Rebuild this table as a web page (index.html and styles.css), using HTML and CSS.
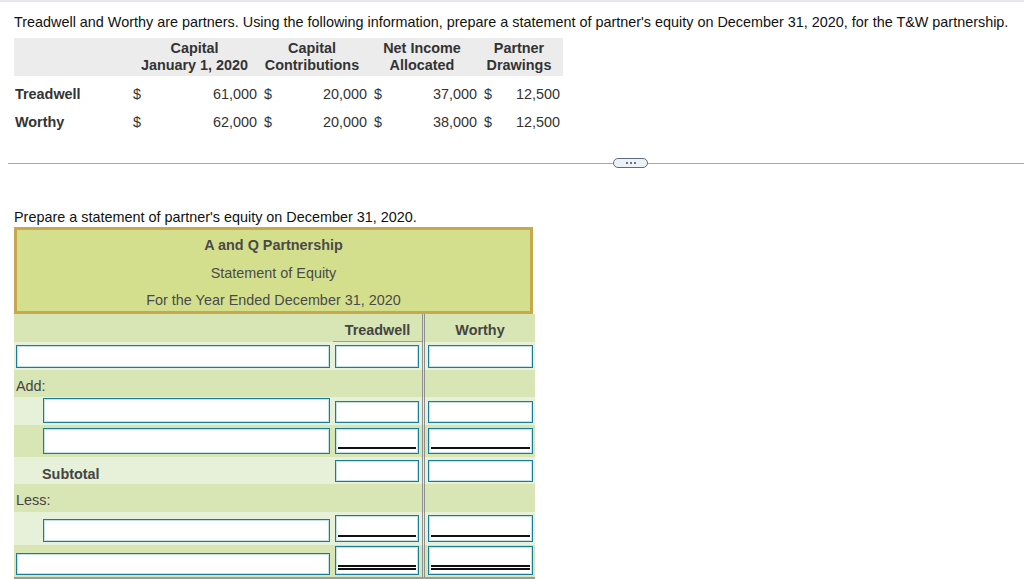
FILE: index.html
```html
<!DOCTYPE html>
<html>
<head>
<meta charset="utf-8">
<link rel="stylesheet" href="styles.css">
</head>
<body>
<div class="topline"></div>
<div class="page">
  <p class="intro">Treadwell and Worthy are partners. Using the following information, prepare a statement of partner's equity on December 31, 2020, for the T&amp;W partnership.</p>

  <div class="data">
    <div class="dhead">
      <div></div>
      <div>Capital<br>January 1, 2020</div>
      <div>Capital<br>Contributions</div>
      <div>Net Income<br>Allocated</div>
      <div>Partner<br>Drawings</div>
    </div>
    <div class="dbody">
      <div class="drow">
        <div class="dname">Treadwell</div>
        <div class="dval"><span>$</span><span>61,000</span></div>
        <div class="dval"><span>$</span><span>20,000</span></div>
        <div class="dval"><span>$</span><span>37,000</span></div>
        <div class="dval"><span>$</span><span>12,500</span></div>
      </div>
      <div class="drow">
        <div class="dname">Worthy</div>
        <div class="dval"><span>$</span><span>62,000</span></div>
        <div class="dval"><span>$</span><span>20,000</span></div>
        <div class="dval"><span>$</span><span>38,000</span></div>
        <div class="dval"><span>$</span><span>12,500</span></div>
      </div>
    </div>
  </div>

  <div class="sep">
    <div class="sep-line"></div>
    <div class="more"><i></i><i></i><i></i></div>
    <div class="sep-line"></div>
  </div>

  <p class="prompt">Prepare a statement of partner's equity on December 31, 2020.</p>

  <div class="titlebox">
    <div class="t-bold">A and Q Partnership</div>
    <div>Statement of Equity</div>
    <div>For the Year Ended December 31, 2020</div>
  </div>

  <div class="stmt">
    <div class="srow dark r-head">
      <div class="lab"></div>
      <div class="amt hd">Treadwell</div>
      <div class="amt w hd2">Worthy</div>
    </div>
    <div class="srow light r1">
      <div class="lab"><div class="inp full h23"></div></div>
      <div class="amt"><div class="inp a h23"></div></div>
      <div class="amt w"><div class="inp b h23"></div></div>
    </div>
    <div class="srow dark r-text">
      <div class="lab txt">Add:</div>
      <div class="amt"></div>
      <div class="amt w"></div>
    </div>
    <div class="srow light r3">
      <div class="lab"><div class="inp ind h25"></div></div>
      <div class="amt"><div class="inp a h22"></div></div>
      <div class="amt w"><div class="inp b h22"></div></div>
    </div>
    <div class="srow dark r4">
      <div class="lab"><div class="inp ind h26"></div></div>
      <div class="amt"><div class="inp a h26 u"></div></div>
      <div class="amt w"><div class="inp b h26 u"></div></div>
    </div>
    <div class="srow light r5">
      <div class="lab txt sub">Subtotal</div>
      <div class="amt"><div class="inp a h22"></div></div>
      <div class="amt w"><div class="inp b h22"></div></div>
    </div>
    <div class="srow dark r-text r6">
      <div class="lab txt">Less:</div>
      <div class="amt"></div>
      <div class="amt w"></div>
    </div>
    <div class="srow light r7">
      <div class="lab"><div class="inp ind h23"></div></div>
      <div class="amt"><div class="inp a h27 u"></div></div>
      <div class="amt w"><div class="inp b h27 u"></div></div>
    </div>
    <div class="srow dark r8">
      <div class="lab"><div class="inp full h22"></div></div>
      <div class="amt"><div class="inp a h29 uu"></div></div>
      <div class="amt w"><div class="inp b h29 uu"></div></div>
    </div>
  </div>
</div>
</body>
</html>
```

FILE: styles.css
```css
html, body {
  margin: 0;
  padding: 0;
  background: #ffffff;
}
body {
  font-family: "Liberation Sans", Arial, Helvetica, sans-serif;
  font-size: 14.4px;
  color: #1a1a1a;
  overflow: hidden;
}
.topline {
  height: 2px;
  background: #e4e7ec;
}
.page {
  padding-left: 14px;
}
.intro {
  margin: 12px 0 0;
  line-height: 17px;
  color: #111;
}

/* data table */
.data {
  margin-top: 7px;
  width: 549px;
  color: #333;
}
.dhead {
  display: grid;
  grid-template-columns: 115px 131px 110px 110px 82px;
  background: #ececec;
  padding: 2px 0 2px;
  font-weight: bold;
  line-height: 17px;
  text-align: center;
}
.dhead > div:nth-child(3) { margin-left: -3px; margin-right: 3px; }
.dhead > div:nth-child(4) { margin-left: -3px; margin-right: 3px; }
.dhead > div:nth-child(5) { margin-left: -2px; margin-right: 2px; }
.dbody {
  padding-top: 4px;
}
.drow {
  display: grid;
  grid-template-columns: 115px 131px 110px 110px 83px;
  height: 28px;
  align-items: center;
}
.dname {
  font-weight: bold;
  padding-left: 1px;
}
.dval {
  display: flex;
  justify-content: space-between;
  padding: 0 3px 0 4px;
}

/* separator */
.sep {
  display: flex;
  align-items: center;
  margin: 22px 0 0 -6px;
  height: 10px;
}
.sep-line {
  height: 1px;
  background: #a3a8b0;
}
.sep-line:first-child {
  width: 605px;
}
.sep-line:last-child {
  flex: 1;
}
.more {
  width: 33px;
  height: 8px;
  border: 1px solid #5d6d7c;
  border-radius: 5px;
  background: #eef2f6;
  display: flex;
  align-items: center;
  justify-content: center;
  gap: 2px;
}
.more i {
  width: 2px;
  height: 2px;
  background: #3c4a58;
  border-radius: 1px;
}

/* statement */
.prompt {
  margin: 41px 0 0;
  line-height: 17px;
  color: #111;
}
.titlebox {
  margin-top: 1px;
  width: 519px;
  box-sizing: border-box;
  border: 3px solid #c7a84c;
  background: #d4df8e;
  padding-top: 2px;
  height: 87px;
  text-align: center;
  line-height: 27.5px;
  color: #4a4a4a;
  overflow: hidden;
}
.t-bold {
  font-weight: bold;
}
.stmt {
  width: 521px;
  border-bottom: 2px solid #9b9b9b;
  color: #444;
}
.srow {
  display: grid;
  grid-template-columns: 318px 90px 113px;
  align-items: end;
  padding-bottom: 2px;
}
.dark {
  background: #d8e5b5;
}
.light {
  background: #e7f0d9;
}
.amt {
  height: 100%;
  display: flex;
  align-items: flex-end;
}
.amt.w {
  border-left: 3px double #8e8e8e;
}
.srow > .amt {
  margin-bottom: -2px;
  padding-bottom: 2px;
}
.r-head {
  height: 28px;
  box-sizing: border-box;
  padding-bottom: 0;
  align-items: stretch;
}
.r-head .amt {
  margin-bottom: 0;
  padding-bottom: 0;
}
.hd, .hd2 {
  justify-content: center;
  align-items: center;
  font-weight: bold;
  padding-top: 3px;
  box-sizing: border-box;
}
.r-head .hd {
  border-bottom: 1px solid #9a9a9a;
  margin-left: 1px;
  padding-top: 5px;
}
.r1 { height: 28px; box-sizing: border-box; }
.r-text { height: 27px; box-sizing: border-box; align-items: stretch; }
.r-text .lab { display: flex; align-items: center; padding-top: 6px; }
.r3 { height: 28px; box-sizing: border-box; }
.r4 { height: 32px; box-sizing: border-box; padding-bottom: 3px; }
.r5 { height: 27px; box-sizing: border-box; align-items: stretch; }
.r5 .lab { display: flex; align-items: center; padding-top: 9px; }
.r6 { height: 28px; }
.r7 { height: 33px; box-sizing: border-box; padding-bottom: 3px; }
.r8 { height: 32px; box-sizing: border-box; }
.r4 > .amt, .r7 > .amt { margin-bottom: -3px; padding-bottom: 3px; }

.txt {
  padding-left: 2px;
}
.sub {
  padding-left: 28px;
  font-weight: bold;
}
.inp {
  box-sizing: border-box;
  background: #ffffff;
  border: 1px solid #187d98;
  box-shadow: inset 0 0 0 1px #c4e2ea;
}
.full {
  margin-left: 2px;
  width: 314px;
}
.ind {
  margin-left: 29px;
  width: 287px;
}
.a {
  margin-left: 3px;
  width: 84px;
}
.b {
  margin-left: 3px;
  width: 105px;
}
.h22 { height: 22px; }
.h23 { height: 23px; }
.h25 { height: 25px; }
.h26 { height: 26px; }
.h27 { height: 27px; }
.h29 { height: 29px; }
.u, .uu {
  display: flex;
  align-items: flex-end;
  padding: 0 2px 4px;
}
.u::after {
  content: "";
  flex: 1;
  border-bottom: 2px solid #111;
}
.uu::after {
  content: "";
  flex: 1;
  border-bottom: 5px double #111;
}
```
